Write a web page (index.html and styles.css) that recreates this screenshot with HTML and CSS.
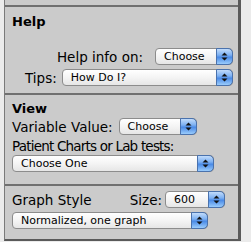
FILE: index.html
```html
<!doctype html>
<html>
<head>
  <meta charset="utf-8">
  <title>Options</title>
  <link rel="stylesheet" href="styles.css">
</head>
<body>
  <div class="panel">
    <div class="panel-top"></div>

    <div class="section help">
      <h3>Help</h3>
      <div class="row right">
        <span class="label">Help info on:</span>
        <span class="select w-choose">Choose<span class="cap"><svg width="7" height="9" viewBox="0 0 7 9"><path d="M3.5 0.5 L6.5 3.5 L0.5 3.5 Z M3.5 8.5 L6.5 5.5 L0.5 5.5 Z" fill="#111"/></svg></span></span>
      </div>
      <div class="row tips">
        <span class="label">Tips:</span>
        <span class="select grow">How Do I?<span class="cap"><svg width="7" height="9" viewBox="0 0 7 9"><path d="M3.5 0.5 L6.5 3.5 L0.5 3.5 Z M3.5 8.5 L6.5 5.5 L0.5 5.5 Z" fill="#111"/></svg></span></span>
      </div>
    </div>

    <div class="section view">
      <h3>View</h3>
      <div class="row">
        <span class="label">Variable Value:</span>
        <span class="select w-var">Choose<span class="cap"><svg width="7" height="9" viewBox="0 0 7 9"><path d="M3.5 0.5 L6.5 3.5 L0.5 3.5 Z M3.5 8.5 L6.5 5.5 L0.5 5.5 Z" fill="#111"/></svg></span></span>
      </div>
      <div class="label line">Patient Charts or Lab tests:</div>
      <span class="select w-charts">Choose One<span class="cap"><svg width="7" height="9" viewBox="0 0 7 9"><path d="M3.5 0.5 L6.5 3.5 L0.5 3.5 Z M3.5 8.5 L6.5 5.5 L0.5 5.5 Z" fill="#111"/></svg></span></span>
    </div>

    <div class="section graph">
      <div class="row between">
        <span class="label">Graph Style</span>
        <span class="size">
          <span class="label">Size:</span>
          <span class="select w-size">600<span class="cap"><svg width="7" height="9" viewBox="0 0 7 9"><path d="M3.5 0.5 L6.5 3.5 L0.5 3.5 Z M3.5 8.5 L6.5 5.5 L0.5 5.5 Z" fill="#111"/></svg></span></span>
        </span>
      </div>
      <span class="select w-style">Normalized, one graph<span class="cap"><svg width="7" height="9" viewBox="0 0 7 9"><path d="M3.5 0.5 L6.5 3.5 L0.5 3.5 Z M3.5 8.5 L6.5 5.5 L0.5 5.5 Z" fill="#111"/></svg></span></span>
    </div>
  </div>
</body>
</html>
```

FILE: styles.css
```css
body {
  margin: 0;
  background-color: #ebebeb;
  font-family: "DejaVu Sans", Verdana, sans-serif;
  color: #000;
}
.panel {
  width: 233px;
  margin-left: 4px;
  border-left: 1px solid #7a7a7a;
  border-right: 3px solid #5a5a5a;
  border-bottom: 2px solid #5a5a5a;
  background-color: #cbcbcb;
}
.panel-top {
  height: 5px;
}
.section {
  border-top: 2px solid #707070;
  padding: 0 7px;
}
.section h3 {
  margin: 0;
  font-size: 13px;
  font-weight: bold;
  line-height: 16px;
}
.label {
  font-size: 13.5px;
  line-height: 16px;
}
.row {
  display: flex;
  align-items: center;
}
.row.right {
  justify-content: flex-end;
}
.row.between {
  justify-content: space-between;
}
.select {
  position: relative;
  display: inline-block;
  box-sizing: border-box;
  height: 17px;
  padding-left: 8px;
  border: 1px solid #8c8c8c;
  border-radius: 4px;
  background: linear-gradient(#ffffff, #f4f4f4 50%, #e6e6e6);
  font-family: "DejaVu Sans", "Lucida Grande", sans-serif;
  font-size: 11px;
  line-height: 15px;
  white-space: nowrap;
}
.select .cap {
  position: absolute;
  top: -1px;
  right: -1px;
  bottom: -1px;
  width: 15px;
  border: 1px solid #4a72ad;
  border-radius: 0 5px 5px 0;
  background: linear-gradient(#c2dcfb, #7cb0f2 40%, #4a8ae6 55%, #9accfc);
  display: flex;
  align-items: center;
  justify-content: center;
}
.help {
  padding: 7px 5px 0 7px;
  height: 79px;
}
.help .row.right {
  margin-top: 18px;
}
.help .row.right .label {
  margin-right: 12px;
}
.w-choose {
  width: 78px;
}
.tips {
  margin-top: 4px;
  padding-left: 13px;
}
.tips .label {
  margin-right: 5px;
}
.grow {
  flex: 1;
}
.view {
  padding-top: 6px;
  height: 83px;
}
.view .row {
  margin-top: 1px;
}
.view .row .label {
  margin-right: 6px;
}
.w-var {
  width: 78px;
}
.line {
  margin-top: 3px;
  letter-spacing: -0.8px;
}
.w-charts {
  display: block;
  width: 202px;
  margin-top: 1px;
}
.graph {
  padding-top: 5px;
  height: 48px;
}
.graph .size {
  display: flex;
  align-items: center;
  margin-right: 6px;
}
.graph .size .label {
  margin-right: 3px;
}
.w-size {
  width: 60px;
}
.w-style {
  display: block;
  width: 196px;
  margin-top: 4px;
}
```
